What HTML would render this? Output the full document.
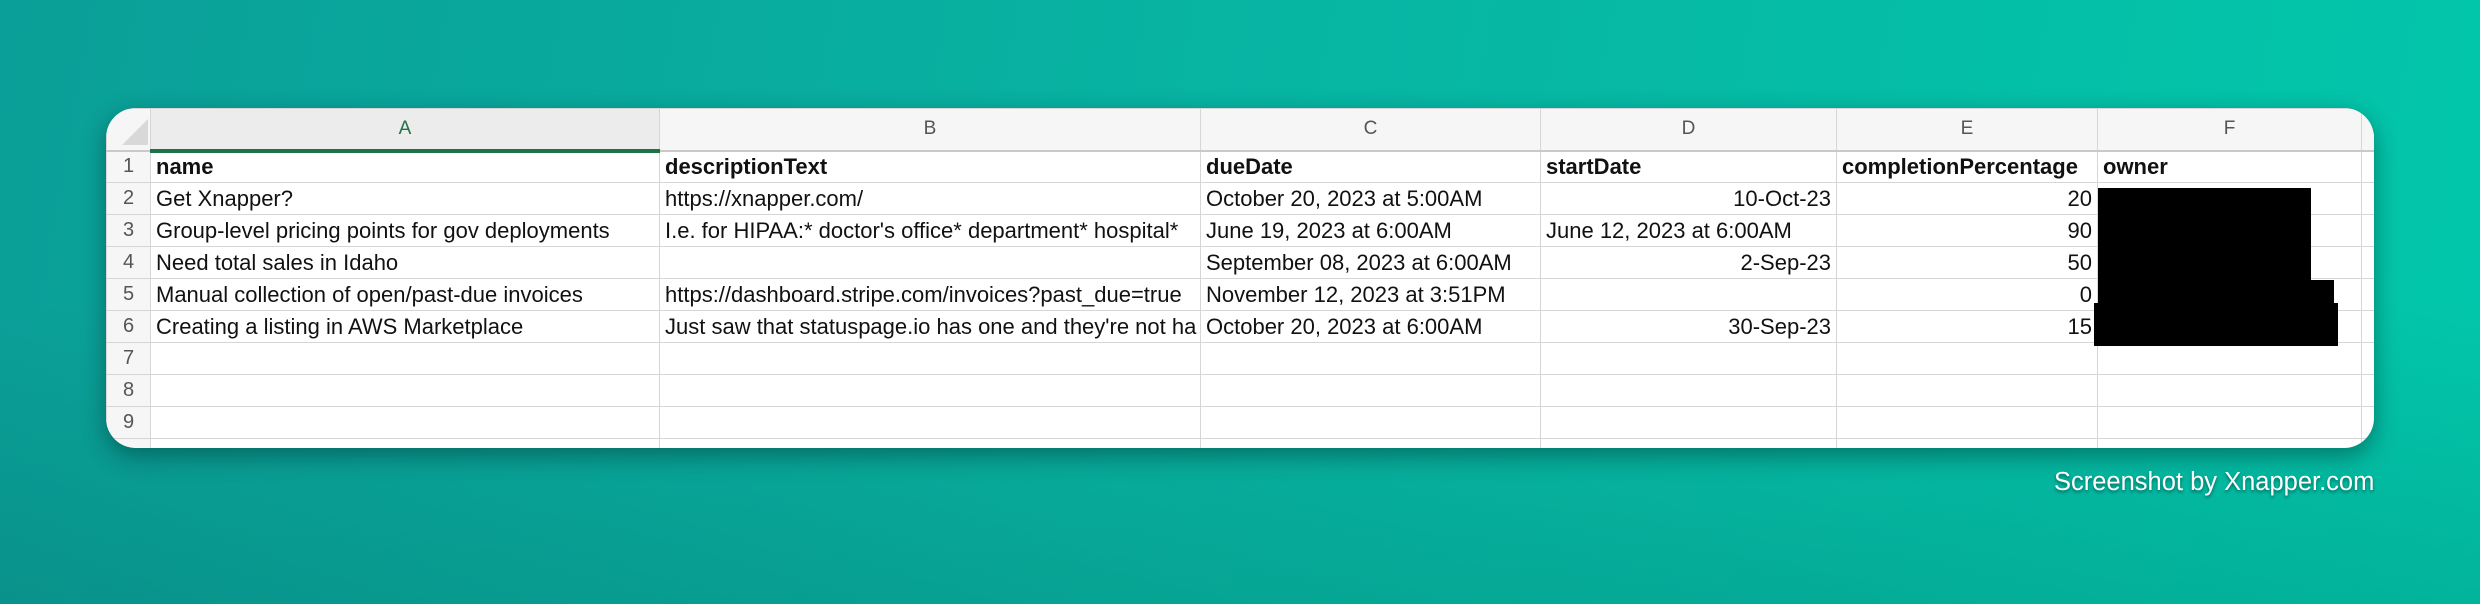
<!DOCTYPE html>
<html><head><style>
*{margin:0;padding:0;box-sizing:border-box}
body{width:2480px;height:604px;overflow:hidden;position:relative;
background:linear-gradient(100deg,#0a9f98 0%,#08b3a2 45%,#02c7ab 100%);font-family:"Liberation Sans",sans-serif}
.shade{position:absolute;left:0;top:0;width:2480px;height:604px;background:linear-gradient(180deg,rgba(0,0,0,0) 50%,rgba(0,40,40,0.12) 100%)}
.card{position:absolute;left:106px;top:108px;width:2268px;height:340px;background:#fff;border-radius:30px;overflow:hidden;box-shadow:0 8px 24px rgba(0,40,40,0.45)}
table{border-collapse:collapse;table-layout:fixed;position:absolute;left:0;top:0;width:2288px}
td{border:1.5px solid #d6d6d6;height:32px;font-size:22px;color:#111;padding:0 5px;white-space:nowrap;overflow:hidden;vertical-align:middle}
tr.h td{height:42px;background:#f6f6f6;color:#555;text-align:center;font-size:19px;border-bottom:2px solid #c9c9c9}
tr.h td.a{color:#1f7245;background:#ececec;border-bottom:4px solid #1f7245}
td.n{background:#f6f6f6;color:#555;text-align:center;padding:0;font-size:20px}
td.r{text-align:right}
b{font-weight:bold}
.red{position:absolute;background:#000}
.wm{position:absolute;left:2054px;top:468px;color:#fff;font-size:25.5px;text-shadow:0 2px 3px rgba(0,0,0,0.45)}
</style></head><body>
<div class="shade"></div>
<div class="card">
<table>
<colgroup><col style="width:44px"><col style="width:509px"><col style="width:541px"><col style="width:340px"><col style="width:296px"><col style="width:261px"><col style="width:264px"><col style="width:33px"></colgroup>
<tr class="h"><td><svg width="30" height="30" viewBox="0 0 30 30" style="display:block;margin:6px 0 0 8px"><polygon points="28,2 28,28 2,28" fill="#d8d8d8"/></svg></td><td class="a">A</td><td>B</td><td>C</td><td>D</td><td>E</td><td>F</td><td></td></tr>
<tr><td class="n">1</td><td><b>name</b></td><td><b>descriptionText</b></td><td><b>dueDate</b></td><td><b>startDate</b></td><td><b>completionPercentage</b></td><td><b>owner</b></td><td></td></tr>
<tr><td class="n">2</td><td>Get Xnapper?</td><td>https://xnapper.com/</td><td>October 20, 2023 at 5:00AM</td><td class="r">10-Oct-23</td><td class="r">20</td><td></td><td></td></tr>
<tr><td class="n">3</td><td>Group-level pricing points for gov deployments</td><td>I.e. for HIPAA:* doctor's office* department* hospital*</td><td>June 19, 2023 at 6:00AM</td><td>June 12, 2023 at 6:00AM</td><td class="r">90</td><td></td><td></td></tr>
<tr><td class="n">4</td><td>Need total sales in Idaho</td><td></td><td>September 08, 2023 at 6:00AM</td><td class="r">2-Sep-23</td><td class="r">50</td><td></td><td></td></tr>
<tr><td class="n">5</td><td>Manual collection of open/past-due invoices</td><td>https://dashboard.stripe.com/invoices?past_due=true</td><td>November 12, 2023 at 3:51PM</td><td></td><td class="r">0</td><td></td><td></td></tr>
<tr><td class="n">6</td><td>Creating a listing in AWS Marketplace</td><td>Just saw that statuspage.io has one and they're not ha</td><td>October 20, 2023 at 6:00AM</td><td class="r">30-Sep-23</td><td class="r">15</td><td></td><td></td></tr>
<tr><td class="n">7</td><td></td><td></td><td></td><td></td><td></td><td></td><td></td></tr>
<tr><td class="n">8</td><td></td><td></td><td></td><td></td><td></td><td></td><td></td></tr>
<tr><td class="n">9</td><td></td><td></td><td></td><td></td><td></td><td></td><td></td></tr>
<tr><td class="n"></td><td></td><td></td><td></td><td></td><td></td><td></td><td></td></tr>
</table>
</div>
<div class="red" style="left:2098px;top:188px;width:213px;height:93px"></div>
<div class="red" style="left:2098px;top:280px;width:236px;height:24px"></div>
<div class="red" style="left:2094px;top:303px;width:244px;height:43px"></div>
<div class="wm">Screenshot by Xnapper.com</div>
</body></html>
